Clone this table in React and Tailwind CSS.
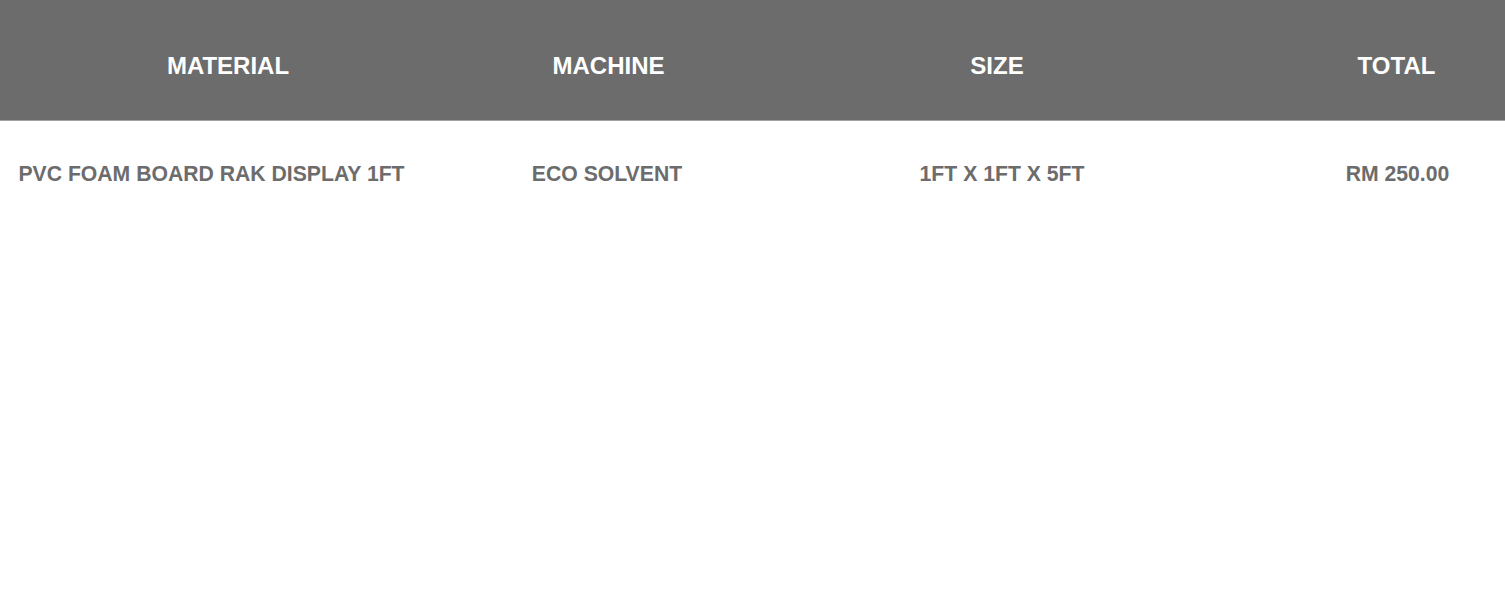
export default function App() {
  const font = { fontFamily: '"Liberation Sans", Arial, Helvetica, sans-serif' };
  return (
    <div className="min-h-[602px] w-[1505px] bg-white" style={font}>
      <div className="grid h-[121px] grid-cols-[456px_305px_472px_272px] border-b border-[#a3a3a3] bg-[#6c6c6c] pt-[52px] text-[24px] font-bold leading-[28px] text-white">
        <div className="text-center">MATERIAL</div>
        <div className="text-center">MACHINE</div>
        <div className="text-center">SIZE</div>
        <div className="pl-[55px] text-center">TOTAL</div>
      </div>
      <div className="grid grid-cols-[423px_368px_422px_292px] pt-[41px] text-[21.2px] font-bold leading-[24px] text-[#6c6c6c]">
        <div className="text-center">PVC FOAM BOARD RAK DISPLAY 1FT</div>
        <div className="text-center">ECO SOLVENT</div>
        <div className="text-center">1FT X 1FT X 5FT</div>
        <div className="pl-[77px] text-center">RM 250.00</div>
      </div>
    </div>
  );
}
